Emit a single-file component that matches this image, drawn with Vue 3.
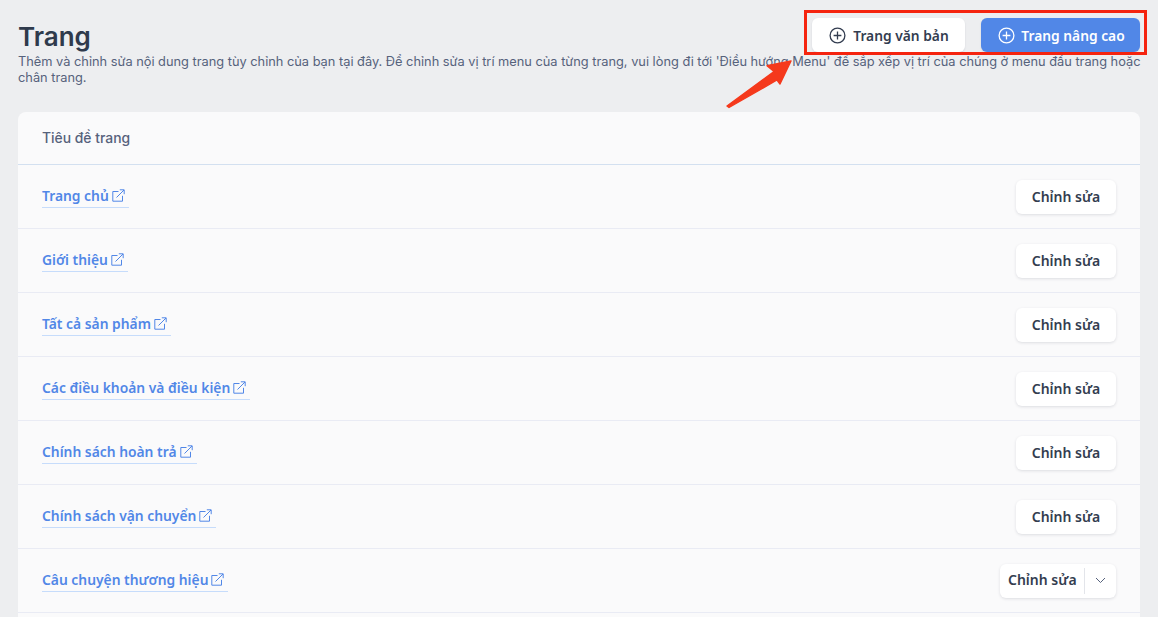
<script setup>
const rows = [
  { title: 'Trang chủ' },
  { title: 'Giới thiệu' },
  { title: 'Tất cả sản phẩm' },
  { title: 'Các điều khoản và điều kiện' },
  { title: 'Chính sách hoàn trả' },
  { title: 'Chính sách vận chuyển' },
  { title: 'Câu chuyện thương hiệu', split: true }
]
</script>

<template>
  <div class="page">
    <header class="head">
      <div class="head-top">
        <h1>Trang</h1>
        <div class="actions">
          <button class="btn white">
            <svg width="17" height="17" viewBox="0 0 17 17" fill="none" stroke="currentColor" stroke-width="1.3"><circle cx="8.5" cy="8.5" r="7.4"/><path d="M8.5 4.6v7.8M4.6 8.5h7.8"/></svg>
            Trang văn bản
          </button>
          <button class="btn blue">
            <svg width="17" height="17" viewBox="0 0 17 17" fill="none" stroke="currentColor" stroke-width="1.3"><circle cx="8.5" cy="8.5" r="7.4"/><path d="M8.5 4.6v7.8M4.6 8.5h7.8"/></svg>
            Trang nâng cao
          </button>
        </div>
      </div>
      <p class="desc">Thêm và chỉnh sửa nội dung trang tùy chỉnh của bạn tại đây. Để chỉnh sửa vị trí menu của từng trang, vui lòng đi tới 'Điều hướng Menu' để sắp xếp vị trí của chúng ở menu đầu trang hoặc chân trang.</p>
    </header>

    <section class="card">
      <div class="card-head">Tiêu đề trang</div>
      <div v-for="r in rows" :key="r.title" class="row">
        <a class="link">
          {{ r.title }}
          <svg width="13" height="13" viewBox="0 0 13 13" fill="none" stroke="currentColor" stroke-width="1"><path d="M6.5 2.5H.8v9.7h9.7V6.8"/><path d="M4.5 8.5 12 1M7.8.8h4.4v4.4"/></svg>
        </a>
        <div v-if="r.split" class="split">
          <span class="split-label">Chỉnh sửa</span>
          <span class="split-caret">
            <svg width="11" height="7" viewBox="0 0 11 7" fill="none" stroke="currentColor" stroke-width="1"><path d="m1 1 4.5 4.5L10 1"/></svg>
          </span>
        </div>
        <button v-else class="edit">Chỉnh sửa</button>
      </div>
    </section>

    <div class="red-box"></div>
    <svg class="arrow" width="72" height="52" viewBox="0 0 72 52">
      <path d="M71 3 47 7.7 54 13.5 7 48 9 49.5 57 22 60 26Z" fill="#f5391c" stroke="#f5391c" stroke-width="1.4" stroke-linejoin="round"/>
    </svg>
  </div>
</template>

<style scoped>
.page {
  position: relative;
  display: flex;
  flex-direction: column;
  height: 617px;
  overflow: hidden;
  box-sizing: border-box;
  padding: 18px 18px 0;
  background: #edeef0;
  font-family: Inter, "Noto Sans", sans-serif;
}
.head {
  height: 94px;
  flex: none;
}
.head-top {
  display: flex;
  justify-content: space-between;
  align-items: flex-start;
  height: 36px;
}
h1 {
  margin: 0;
  font-size: 26px;
  line-height: 38px;
  font-weight: 600;
  color: #2f3a4c;
}
.actions {
  display: flex;
  gap: 16px;
}
.btn {
  display: flex;
  align-items: center;
  justify-content: center;
  height: 34px;
  border: 0;
  border-radius: 6px;
  font-family: "Noto Sans", sans-serif;
  font-size: 13.8px;
  font-weight: 600;
  box-shadow: 0 1px 2px rgba(40, 50, 70, 0.12);
}
.white {
  gap: 7px;
  width: 153px;
  padding: 0 0 0 1px;
  background: #fff;
  color: #333d50;
}
.blue {
  gap: 6px;
  width: 159px;
  padding: 0 0 0 2px;
  background: #5187e7;
  color: #fff;
}
.desc {
  margin: 0 -6px 0 0;
  font-size: 12.8px;
  line-height: 16px;
  color: #56627c;
}
.card {
  flex: 1;
  background: #fafafb;
  border-radius: 8px 8px 0 0;
}
.card-head {
  display: flex;
  align-items: center;
  box-sizing: border-box;
  height: 53px;
  padding: 0 24px 1px;
  border-bottom: 1px solid #d3e0f0;
  font-size: 13.9px;
  font-weight: 500;
  color: #56627c;
}
.row {
  display: flex;
  align-items: center;
  justify-content: space-between;
  box-sizing: border-box;
  height: 64px;
  padding: 0 24px;
  border-bottom: 1px solid #e9ebf4;
}
.link {
  display: flex;
  align-items: center;
  gap: 3px;
  padding-right: 4px;
  padding-bottom: 1px;
  border-bottom: 1px solid #c6dcfb;
  font-family: "Noto Sans", sans-serif;
  font-size: 13.85px;
  line-height: 20px;
  font-weight: 600;
  color: #5187e7;
}
.edit,
.split {
  height: 34px;
  padding: 0;
  border: 0;
  border-radius: 6px;
  background: #fff;
  color: #333d50;
  font-family: "Noto Sans", sans-serif;
  font-size: 14px;
  font-weight: 600;
  box-shadow: 0 1px 3px rgba(40, 50, 70, 0.14);
}
.edit {
  width: 100px;
}
.split {
  display: flex;
  align-items: center;
  width: 116px;
}
.split-label {
  box-sizing: border-box;
  width: 85px;
  height: 26px;
  padding-left: 8px;
  line-height: 24px;
  border-right: 1px solid #e3e5ea;
}
.split-caret {
  display: flex;
  justify-content: center;
  flex: 1;
  color: #56627c;
}
.red-box {
  position: absolute;
  left: 804px;
  top: 10px;
  box-sizing: border-box;
  width: 343px;
  height: 45px;
  border: 3px solid #f5240f;
}
.arrow {
  position: absolute;
  left: 720px;
  top: 58px;
}
</style>

<style>
html, body { margin: 0; }
</style>
